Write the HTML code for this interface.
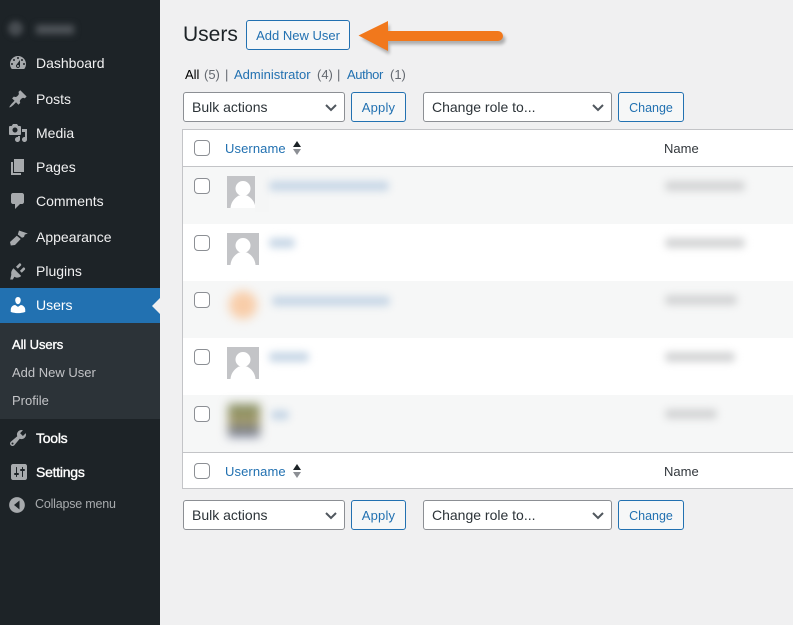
<!DOCTYPE html>
<html><head><meta charset="utf-8"><title>Users</title>
<style>
html,body{margin:0;padding:0}
body{width:793px;height:625px;overflow:hidden;position:relative;background:#f0f0f1;font-family:"Liberation Sans",sans-serif;font-size:13px;color:#3c434a}
.a{position:absolute;white-space:nowrap}
#side{position:absolute;left:0;top:0;width:160px;height:625px;background:#1d2327}
.m{position:absolute;left:36px;color:#f0f0f1;font-size:14px;line-height:20px;white-space:nowrap}
.b{-webkit-text-stroke:.35px currentColor;letter-spacing:-.25px}
.s{position:absolute;left:12px;color:#c3c4c7;font-size:13px;line-height:18px;white-space:nowrap}
#side svg{position:absolute;fill:#a7aaad;width:20px;height:20px}
.sel{position:absolute;height:30px;box-sizing:border-box;border:1px solid #8c8f94;border-radius:3px;background:#fff;color:#2c3338;font-size:14px;line-height:28px;padding-left:8px;white-space:nowrap}
.sel svg{position:absolute;right:6px;top:9px}
.btn{position:absolute;height:30px;box-sizing:border-box;border:1px solid #2271b1;border-radius:3px;background:#f6f7f7;color:#2271b1;font-size:13px;line-height:30px;text-align:center;white-space:nowrap}
.row{position:absolute;left:183px;width:610px}
.cb{position:absolute;left:194px;width:14px;height:14px;border:1px solid #8c8f94;border-radius:4px;background:#fff}
.av{position:absolute;left:227px;width:32px;height:32px}
.bl{position:absolute;filter:blur(4px);height:10px;border-radius:4px}
.u{background:#c8d7e6}.n{background:#d3d4d5}
.f{position:absolute;top:66px;line-height:18px;font-size:13px;color:#646970;white-space:nowrap}
a{color:#2271b1;text-decoration:none}
</style></head><body>

<div id="side">
  <div class="a" style="left:8px;top:21px;width:15px;height:15px;border-radius:8px;background:#474c51;filter:blur(3px)"></div>
  <div class="a" style="left:36px;top:25px;width:38px;height:9px;background:#50555a;filter:blur(3.500px)"></div>

  <svg style="left:8px;top:53px" viewBox="0 0 20 20"><path d="M3.76 16h12.48c1.100-1.370 1.760-3.110 1.760-5 0-4.420-3.580-8-8-8s-8 3.580-8 8c0 1.890.660 3.630 1.760 5zM10 4c.550 0 1 .450 1 1s-.450 1-1 1-1-.450-1-1 .450-1 1-1zM6 6c.550 0 1 .450 1 1s-.450 1-1 1-1-.450-1-1 .450-1 1-1zm8 0c.550 0 1 .450 1 1s-.450 1-1 1-1-.450-1-1 .450-1 1-1zm-5.370 5.550L12 7v6c0 1.100-.900 2-2 2s-2-.900-2-2c0-.570.240-1.080.630-1.450zM4 10c.550 0 1 .450 1 1s-.450 1-1 1-1-.450-1-1 .450-1 1-1zm12 0c.550 0 1 .450 1 1s-.450 1-1 1-1-.450-1-1 .450-1 1-1zm-5 3c0-.550-.450-1-1-1s-1 .450-1 1 .450 1 1 1 1-.450 1-1z" fill-rule="evenodd"/></svg>
  <div class="m" style="top:53px">Dashboard</div>

  <svg style="left:8px;top:89px" viewBox="0 0 20 20"><path d="M10.440 3.020l1.820-1.820 6.360 6.350-1.830 1.820c-1.050-.680-2.480-.570-3.410.360l-.750.750c-.920.930-1.040 2.350-.350 3.410l-1.830 1.820-2.410-2.410-2.800 2.790c-.420.420-3.380 2.710-3.800 2.290s1.860-3.390 2.280-3.810l2.790-2.790L4.100 9.360l1.830-1.820c1.050.690 2.480.570 3.400-.360l.750-.750c.930-.920 1.050-2.350.360-3.410z"/></svg>
  <div class="m" style="top:89px">Posts</div>

  <svg style="left:8px;top:123px" viewBox="0 0 20 20"><path d="M13 11V4c0-.550-.450-1-1-1h-1.670L9 1H5L3.670 3H2c-.550 0-1 .450-1 1v7c0 .550.450 1 1 1h10c.550 0 1-.450 1-1zM7 4.500c1.380 0 2.500 1.120 2.500 2.500S8.380 9.500 7 9.500 4.500 8.380 4.500 7 5.620 4.500 7 4.500zM14 6h5v10.500c0 1.380-1.120 2.500-2.500 2.500S14 17.880 14 16.500s1.120-2.500 2.500-2.500c.170 0 .340.020.500.050V9h-3V6zm-4 8.050V13h2v3.500c0 1.380-1.120 2.500-2.500 2.500S7 17.880 7 16.500 8.120 14 9.500 14c.170 0 .340.020.500.050z"/></svg>
  <div class="m" style="top:123px">Media</div>

  <svg style="left:8px;top:157px" viewBox="0 0 20 20"><path d="M6 15V2h10v13H6zm-1 1h8v2H3V5h2v11z"/></svg>
  <div class="m" style="top:157px">Pages</div>

  <svg style="left:8px;top:191px" viewBox="0 0 20 20"><path d="M5 2h9c1.100 0 2 .900 2 2v7c0 1.100-.900 2-2 2h-2l-5 5v-5H5c-1.100 0-2-.900-2-2V4c0-1.100.900-2 2-2z"/></svg>
  <div class="m" style="top:191px">Comments</div>

  <svg style="left:8px;top:228px" viewBox="0 0 20 20"><path d="M11 2.500 19.800 5.500 16.800 6.600 16 9 14 9.800 9.800 6.500z"/><path d="M8.800 7.800 12.700 11 7 17 2.800 17.500 2 14z"/></svg>
  <div class="m" style="top:227px">Appearance</div>

  <svg style="left:8px;top:261px" viewBox="0 0 20 20"><path d="M13.110 4.360L9.870 7.600 8 5.730l3.240-3.240c.350-.340 1.050-.250 1.540.240.490.490.580 1.190.330 1.630zM17 8.500l-3.240 3.240-1.870-1.870 3.240-3.240c.350-.340 1.050-.250 1.540.240.490.490.580 1.190.330 1.630z"/><path d="M5.500 7.300 13.200 15C10.800 17 8.200 17 6.400 15.700L4.800 18.500H2.200L3.300 13.800C2.800 11.500 3.500 9.300 5.500 7.300z"/></svg>
  <div class="m" style="top:261px">Plugins</div>

  <div class="a" style="left:0;top:288px;width:160px;height:35px;background:#2271b1"></div>
  <div class="a" style="left:152px;top:298px;width:0;height:0;border-top:8px solid transparent;border-bottom:8px solid transparent;border-right:8px solid #f0f0f1"></div>
  <svg style="left:8px;top:295px;fill:#fff" viewBox="0 0 20 20"><path d="M10 9.250c-2.270 0-2.730-3.440-2.730-3.440C7 4.020 7.820 2 9.970 2c2.160 0 2.980 2.020 2.710 3.810 0 0-.410 3.440-2.680 3.440zm0 2.570L12.720 10c2.390 0 4.520 2.330 4.520 4.530v2.490s-3.650 1.130-7.240 1.130c-3.650 0-7.240-1.130-7.240-1.130v-2.490c0-2.250 1.940-4.530 4.430-4.530z"/></svg>
  <div class="m" style="top:295px;color:#fff">Users</div>

  <div class="a" style="left:0;top:323px;width:160px;height:96px;background:#2c3338"></div>
  <div class="s b" style="top:336px;color:#fff;letter-spacing:-.1px">All Users</div>
  <div class="s" style="top:364px">Add New User</div>
  <div class="s" style="top:392px">Profile</div>

  <svg style="left:8px;top:428px" viewBox="0 0 20 20"><path d="M16.680 9.770c-1.340 1.340-3.300 1.670-4.950.990l-5.410 6.520c-.990.990-2.590.990-3.580 0s-.990-2.590 0-3.570l6.520-5.420c-.680-1.650-.350-3.610.990-4.950 1.280-1.280 3.120-1.620 4.720-1.060l-2.890 2.890 2.820 2.820 2.860-2.870c.530 1.580.180 3.390-1.080 4.650zM3.810 16.210c.400.390 1.030.390 1.420 0 .400-.400.400-1.030 0-1.430-.390-.390-1.020-.390-1.420 0-.390.400-.390 1.030 0 1.430z"/></svg>
  <div class="m b" style="top:428px;color:#fff">Tools</div>

  <svg style="left:9px;top:462px" viewBox="0 0 20 20"><path d="M18 16V4c0-1.100-.900-2-2-2H4c-1.100 0-2 .900-2 2v12c0 1.100.900 2 2 2h12c1.100 0 2-.900 2-2zM8 11h1c.550 0 1 .450 1 1s-.450 1-1 1H8v1.500c0 .280-.220.500-.500.500s-.500-.220-.500-.500V13H6c-.550 0-1-.450-1-1s.450-1 1-1h1V5.500c0-.280.220-.500.500-.500s.500.220.500.500V11zm5-2h-1c-.550 0-1-.450-1-1s.450-1 1-1h1V5.500c0-.280.220-.500.500-.500s.500.220.500.500V7h1c.550 0 1 .450 1 1s-.450 1-1 1h-1v5.500c0 .280-.220.500-.500.500s-.500-.220-.500-.500V9z"/></svg>
  <div class="m b" style="top:462px;color:#fff">Settings</div>

  <svg style="left:7px;top:495px" viewBox="0 0 20 20"><path fill-rule="evenodd" d="M10 2.160c4.330 0 7.840 3.510 7.840 7.840s-3.510 7.840-7.840 7.840S2.160 14.330 2.160 10 5.670 2.160 10 2.160zM12.500 5.500 7 10l5.500 4.500z"/></svg>
  <div class="a" style="left:35px;top:494px;color:#a7aaad;font-size:12.500px;line-height:20px;letter-spacing:-.2px">Collapse menu</div>
</div>

<div class="a" style="left:183px;top:20px;font-size:21px;line-height:30px;color:#1d2327">Users</div>
<div class="btn" style="left:246px;top:20px;width:104px">Add New User</div>

<svg class="a" style="left:355px;top:16px" width="155" height="42" viewBox="0 0 155 42">
  <path d="M5 20 33 6V16H144a5 5 0 0 1 0 10H33V36z" fill="#777" opacity=".55" transform="translate(1.500 2.500)" style="filter:blur(1.500px)"/>
  <path d="M3.500 19.500 33 5V15H143a5 5 0 0 1 0 10H33V35z" fill="#f1781c"/>
</svg>

<div class="f" style="left:185px"><span style="color:#000">All</span></div>
<div class="f" style="left:204px">(5)</div>
<div class="f" style="left:225px">|</div>
<div class="f" style="left:234px"><a>Administrator</a></div>
<div class="f" style="left:317px">(4)</div>
<div class="f" style="left:337px">|</div>
<div class="f" style="left:347px;letter-spacing:-.4px"><a>Author</a></div>
<div class="f" style="left:390px">(1)</div>

<div class="sel" style="left:183px;top:92px;width:162px">Bulk actions<svg width="14" height="12" viewBox="0 0 14 12"><path d="M2 3 7 8 12 3" fill="none" stroke="#50575e" stroke-width="2"/></svg></div>
<div class="btn" style="left:351px;top:92px;width:55px;letter-spacing:.2px">Apply</div>
<div class="sel" style="left:423px;top:92px;width:189px">Change role to...<svg width="14" height="12" viewBox="0 0 14 12"><path d="M2 3 7 8 12 3" fill="none" stroke="#50575e" stroke-width="2"/></svg></div>
<div class="btn" style="left:618px;top:92px;width:66px;font-size:12.500px">Change</div>

<div class="a" style="left:182px;top:129px;width:611px;height:360px;box-sizing:border-box;border:1px solid #c3c4c7;border-right:0;background:#fff"></div>
<div class="a" style="left:183px;top:166px;width:610px;height:1px;background:#c3c4c7"></div>
<div class="row" style="top:167px;height:57px;background:#f6f7f7"></div>
<div class="row" style="top:281px;height:57px;background:#f6f7f7"></div>
<div class="row" style="top:395px;height:57px;background:#f6f7f7"></div>
<div class="a" style="left:183px;top:452px;width:610px;height:1px;background:#c3c4c7"></div>

<div class="cb" style="top:140px"></div>
<div class="a" style="left:225px;top:140px;line-height:18px;letter-spacing:.1px"><a>Username</a></div>
<svg class="a" style="left:292px;top:140px" width="10" height="16" viewBox="0 0 10 16"><path d="M1 7 5 1 9 7z" fill="#1d2327"/><path d="M1 9h8L5 15z" fill="#8c8f94"/></svg>
<div class="a" style="left:664px;top:140px;line-height:18px;color:#32373c">Name</div>

<div class="cb" style="top:178px"></div>
<div class="cb" style="top:235px"></div>
<div class="cb" style="top:292px"></div>
<div class="cb" style="top:349px"></div>
<div class="cb" style="top:406px"></div>

<svg class="av" style="top:176px" viewBox="0 0 32 32"><rect width="32" height="32" fill="#c3c4c7"/><circle cx="16" cy="12.500" r="7.500" fill="#fff"/><path d="M3.500 32C4 25 9 21 12 19.500h8C23 21 28 25 28.500 32z" fill="#fff"/></svg>
<div class="a" style="left:255px;top:170px;width:14px;height:42px;background:#f5f6f6"></div>
<svg class="av" style="top:233px" viewBox="0 0 32 32"><rect width="32" height="32" fill="#c3c4c7"/><circle cx="16" cy="12.500" r="7.500" fill="#fff"/><path d="M3.500 32C4 25 9 21 12 19.500h8C23 21 28 25 28.500 32z" fill="#fff"/></svg>
<div class="a" style="left:229px;top:291px;width:28px;height:28px;background:#f8cda9;border-radius:50%;filter:blur(5px)"></div>
<svg class="av" style="top:347px" viewBox="0 0 32 32"><rect width="32" height="32" fill="#c3c4c7"/><circle cx="16" cy="12.500" r="7.500" fill="#fff"/><path d="M3.500 32C4 25 9 21 12 19.500h8C23 21 28 25 28.500 32z" fill="#fff"/></svg>
<div class="a" style="left:228px;top:404px;width:32px;height:33px;background:linear-gradient(#7f8a5c,#a49b6c 50%,#6c7699);filter:blur(5px)"></div>

<div class="bl u" style="left:269px;top:181px;width:120px"></div>
<div class="bl u" style="left:269px;top:238px;width:26px"></div>
<div class="bl u" style="left:272px;top:296px;width:118px"></div>
<div class="bl u" style="left:269px;top:352px;width:40px"></div>
<div class="bl u" style="left:271px;top:410px;width:18px"></div>

<div class="bl n" style="left:665px;top:181px;width:80px"></div>
<div class="bl n" style="left:665px;top:238px;width:80px"></div>
<div class="bl n" style="left:665px;top:295px;width:72px"></div>
<div class="bl n" style="left:665px;top:352px;width:70px"></div>
<div class="bl n" style="left:665px;top:409px;width:52px"></div>

<div class="cb" style="top:463px"></div>
<div class="a" style="left:225px;top:463px;line-height:18px;letter-spacing:.1px"><a>Username</a></div>
<svg class="a" style="left:292px;top:463px" width="10" height="16" viewBox="0 0 10 16"><path d="M1 7 5 1 9 7z" fill="#1d2327"/><path d="M1 9h8L5 15z" fill="#8c8f94"/></svg>
<div class="a" style="left:664px;top:463px;line-height:18px;color:#32373c">Name</div>

<div class="sel" style="left:183px;top:500px;width:162px">Bulk actions<svg width="14" height="12" viewBox="0 0 14 12"><path d="M2 3 7 8 12 3" fill="none" stroke="#50575e" stroke-width="2"/></svg></div>
<div class="btn" style="left:351px;top:500px;width:55px;letter-spacing:.2px">Apply</div>
<div class="sel" style="left:423px;top:500px;width:189px">Change role to...<svg width="14" height="12" viewBox="0 0 14 12"><path d="M2 3 7 8 12 3" fill="none" stroke="#50575e" stroke-width="2"/></svg></div>
<div class="btn" style="left:618px;top:500px;width:66px;font-size:12.500px">Change</div>

</body></html>
